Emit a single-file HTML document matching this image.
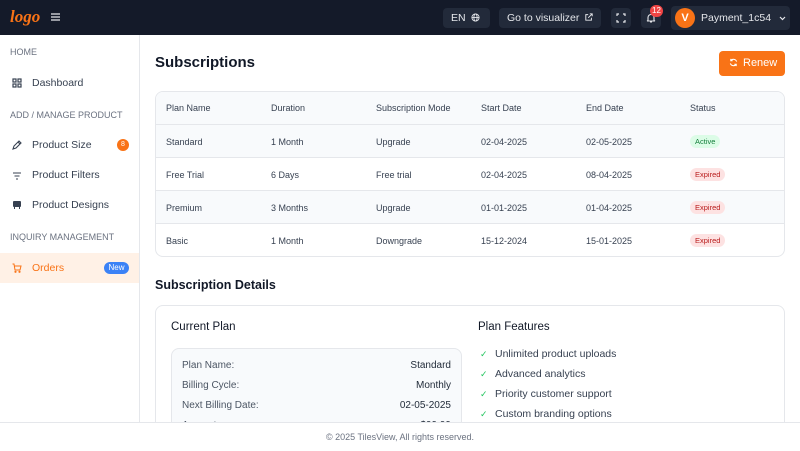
<!DOCTYPE html>
<html><head><style>
*{box-sizing:border-box;margin:0;padding:0}
body{width:800px;height:450px;overflow:hidden;font-family:"Liberation Sans",sans-serif;background:#fff;position:relative;color:#1f2937}
.hdr{position:absolute;left:0;top:0;width:800px;height:35px;background:#141a29}
.ab{position:absolute}
.pill{position:absolute;top:8px;height:20px;background:#222a3a;border-radius:4px;color:#e5e7eb;font-size:10.5px;line-height:20px}
.side{position:absolute;left:0;top:35px;width:140px;height:387px;border-right:1px solid #e5e7eb}
.sec{position:absolute;left:10px;font-size:9px;color:#6b7280}
.it{position:absolute;left:32px;font-size:10.5px;color:#374151}
.ic{position:absolute;left:12px;width:10px;height:10px}
.tbl{position:absolute;left:155px;top:91px;width:630px;height:166px;border:1px solid #e5e7eb;border-radius:8px;overflow:hidden}
.row{position:absolute;left:0;width:630px;height:33px;border-top:1px solid #e5e7eb;font-size:9px;color:#374151}
.row span{position:absolute;top:12px}
.bd{position:absolute;left:534px;top:10px;height:13px;line-height:13px;padding:0 5px;border-radius:7px;font-size:7.5px}
.ex{background:#fde2e2;color:#b91c1c}
.ac{background:#dcfce7;color:#15803d}
.ft{position:absolute;left:0;top:422px;width:800px;height:28px;border-top:1px solid #e5e7eb;background:#fff;text-align:center;font-size:9px;color:#6b7280;line-height:28px}
.lbl{position:absolute;font-size:10px;color:#4b5563}
.val{position:absolute;right:0;font-size:10px;color:#1f2937}
.feat{position:absolute;left:495px;font-size:10.5px;color:#374151}
.chk{position:absolute;left:480px;color:#22c55e;font-size:9px}
</style></head><body>
<div class="hdr">
<div class="ab" style="left:10px;top:7px;color:#f97316;font-family:'Liberation Serif',serif;font-style:italic;font-weight:bold;font-size:17px">logo</div>
<svg class="ab" style="left:51px;top:13px" width="9" height="8" viewBox="0 0 9 8" stroke="#e5e7eb" stroke-width="1.3"><path d="M0 1H9M0 4H9M0 7H9"/></svg>
<div class="pill" style="left:443px;width:47px;padding-left:8px">EN <svg width="9" height="9" viewBox="0 0 10 10" fill="none" stroke="#e5e7eb" stroke-width="1" style="vertical-align:-1px;margin-left:2px"><circle cx="5" cy="5" r="4"/><ellipse cx="5" cy="5" rx="1.8" ry="4"/><path d="M1 5H9"/></svg></div>
<div class="pill" style="left:499px;width:102px;padding-left:8px">Go to visualizer <svg width="8" height="8" viewBox="0 0 10 10" fill="none" stroke="#e5e7eb" stroke-width="1.2" style="margin-left:3px"><path d="M8 6v3H1V2h3M6 1h3v3M9 1L4 6"/></svg></div>
<div class="pill" style="left:611px;width:20px"><svg class="ab" style="left:5px;top:5px" width="10" height="10" viewBox="0 0 10 10" fill="none" stroke="#e5e7eb" stroke-width="1.2"><path d="M1 3V1h2M7 1h2v2M9 7v2H7M3 9H1V7"/></svg></div>
<div class="pill" style="left:641px;width:20px"><svg class="ab" style="left:5px;top:5px" width="10" height="10" viewBox="0 0 10 10" fill="none" stroke="#e5e7eb" stroke-width="1.1"><path d="M2 7.5V4.5a3 3 0 016 0v3l1 .5H1zM4 9h2"/></svg></div>
<div class="ab" style="left:650px;top:5px;width:13px;height:12px;border-radius:6px;background:#ef4444;color:#fff;font-size:8px;text-align:center;line-height:12px">12</div>
<div class="pill" style="left:671px;top:6px;width:119px;height:24px;line-height:24px;padding-left:30px">Payment_1c54 <svg width="7" height="5" viewBox="0 0 7 5" fill="none" stroke="#e5e7eb" stroke-width="1.2" style="margin-left:5px"><path d="M1 1l2.5 2.5L6 1"/></svg></div>
<div class="ab" style="left:675px;top:8px;width:20px;height:20px;border-radius:10px;background:#f97316;color:#fff;font-size:11px;font-weight:bold;text-align:center;line-height:20px">V</div>
</div>
<div class="side">
<div class="sec" style="top:12px">HOME</div>
<svg class="ic" style="top:43px" viewBox="0 0 10 10" fill="none" stroke="#374151" stroke-width="1.2"><rect x="1" y="1" width="3" height="3"/><rect x="6" y="1" width="3" height="3"/><rect x="1" y="6" width="3" height="3"/><rect x="6" y="6" width="3" height="3"/></svg>
<div class="it" style="top:42px">Dashboard</div>
<div class="sec" style="top:75px">ADD / MANAGE PRODUCT</div>
<svg class="ic" style="top:105px" viewBox="0 0 10 10" fill="none" stroke="#374151" stroke-width="1.1"><path d="M1 9l1-3 5-5 2 2-5 5zM6 2l2 2"/></svg>
<div class="it" style="top:104px">Product Size</div>
<div class="ab" style="left:117px;top:104px;width:12px;height:12px;border-radius:6px;background:#f97316;color:#fff;font-size:7px;text-align:center;line-height:12px">8</div>
<svg class="ic" style="top:136px" viewBox="0 0 10 10" stroke="#374151" stroke-width="1"><path d="M1 2H9M2.5 5H7.5M4 8H6"/></svg>
<div class="it" style="top:134px">Product Filters</div>
<svg class="ic" style="top:165px" viewBox="0 0 10 10" fill="#374151"><rect x="1" y="1" width="8" height="6" rx="1"/><rect x="2" y="7" width="1" height="2"/><rect x="7" y="7" width="1" height="2"/></svg>
<div class="it" style="top:164px">Product Designs</div>
<div class="sec" style="top:197px">INQUIRY MANAGEMENT</div>
<div class="ab" style="left:0;top:218px;width:139px;height:30px;background:#fff1e6"></div>
<svg class="ic" style="top:228px" viewBox="0 0 10 10" fill="none" stroke="#f97316" stroke-width="1"><path d="M0.5 1h1.5l1 6h5l1-4H2.5"/><circle cx="3.5" cy="8.8" r=".6"/><circle cx="7.5" cy="8.8" r=".6"/></svg>
<div class="it" style="top:227px;color:#f97316">Orders</div>
<div class="ab" style="left:104px;top:227px;width:25px;height:12px;border-radius:6px;background:#3b82f6;color:#fff;font-size:8px;text-align:center;line-height:12px">New</div>
</div>
<div class="ab" style="left:155px;top:54px;font-size:15px;font-weight:bold;color:#111827">Subscriptions</div>
<div class="ab" style="left:719px;top:51px;width:66px;height:25px;background:#f97316;border-radius:4px;color:#fff;font-size:11px;line-height:25px;padding-left:10px"><svg width="9" height="9" viewBox="0 0 10 10" fill="none" stroke="#fff" stroke-width="1.2" style="vertical-align:-1px;margin-right:5px"><path d="M8.5 4A3.7 3.7 0 002 3M1.5 6A3.7 3.7 0 008 7M2 1v2h2M8 9V7H6"/></svg>Renew</div>
<div class="tbl">
<div class="row" style="top:-1px;background:#f8fafc;border-top:none;height:33px"><span style="left:10px">Plan Name</span><span style="left:115px">Duration</span><span style="left:220px">Subscription Mode</span><span style="left:325px">Start Date</span><span style="left:430px">End Date</span><span style="left:534px">Status</span></div>
<div class="row" style="top:32px;background:#f8fafc"><span style="left:10px">Standard</span><span style="left:115px">1 Month</span><span style="left:220px">Upgrade</span><span style="left:325px">02-04-2025</span><span style="left:430px">02-05-2025</span><div class="bd ac">Active</div></div>
<div class="row" style="top:65px"><span style="left:10px">Free Trial</span><span style="left:115px">6 Days</span><span style="left:220px">Free trial</span><span style="left:325px">02-04-2025</span><span style="left:430px">08-04-2025</span><div class="bd ex">Expired</div></div>
<div class="row" style="top:98px;background:#f8fafc"><span style="left:10px">Premium</span><span style="left:115px">3 Months</span><span style="left:220px">Upgrade</span><span style="left:325px">01-01-2025</span><span style="left:430px">01-04-2025</span><div class="bd ex">Expired</div></div>
<div class="row" style="top:131px"><span style="left:10px">Basic</span><span style="left:115px">1 Month</span><span style="left:220px">Downgrade</span><span style="left:325px">15-12-2024</span><span style="left:430px">15-01-2025</span><div class="bd ex">Expired</div></div>
</div>
<div class="ab" style="left:155px;top:278px;font-size:12.5px;font-weight:bold;color:#111827">Subscription Details</div>
<div class="ab" style="left:155px;top:305px;width:630px;height:140px;border:1px solid #e5e7eb;border-radius:8px"></div>
<div class="ab" style="left:171px;top:321px;font-size:11.5px;color:#111827">Current Plan</div>
<div class="ab" style="left:171px;top:348px;width:291px;height:100px;border:1px solid #e5e7eb;border-radius:8px;background:#f8fafc">
<div class="ab" style="left:10px;right:10px;top:11px;height:80px">
<div class="lbl" style="top:0">Plan Name:</div><div class="val" style="top:0">Standard</div>
<div class="lbl" style="top:20px">Billing Cycle:</div><div class="val" style="top:20px">Monthly</div>
<div class="lbl" style="top:40px">Next Billing Date:</div><div class="val" style="top:40px">02-05-2025</div>
<div class="lbl" style="top:60px">Amount:</div><div class="val" style="top:60px">$99.99</div>
</div></div>
<div class="ab" style="left:478px;top:321px;font-size:11.5px;color:#111827">Plan Features</div>
<div class="chk" style="top:349px">✓</div><div class="feat" style="top:348px">Unlimited product uploads</div>
<div class="chk" style="top:369px">✓</div><div class="feat" style="top:368px">Advanced analytics</div>
<div class="chk" style="top:389px">✓</div><div class="feat" style="top:388px">Priority customer support</div>
<div class="chk" style="top:409px">✓</div><div class="feat" style="top:408px">Custom branding options</div>
<div class="ft">© 2025 TilesView, All rights reserved.</div>
</body></html>
